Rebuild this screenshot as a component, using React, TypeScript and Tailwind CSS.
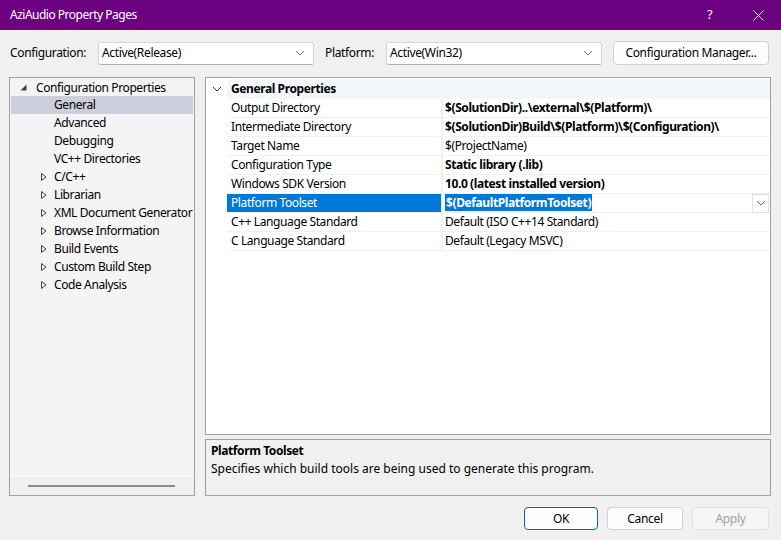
import React from "react";

const font = { fontFamily: '"Noto Sans", "Open Sans", sans-serif' };

type Row = { label: string; value: string; bold?: boolean; selected?: boolean };

const rows: Row[] = [
    { label: "Output Directory", value: "$(SolutionDir)..\\external\\$(Platform)\\", bold: true },
    { label: "Intermediate Directory", value: "$(SolutionDir)Build\\$(Platform)\\$(Configuration)\\", bold: true },
    { label: "Target Name", value: "$(ProjectName)" },
    { label: "Configuration Type", value: "Static library (.lib)", bold: true },
    { label: "Windows SDK Version", value: "10.0 (latest installed version)", bold: true },
    { label: "Platform Toolset", value: "$(DefaultPlatformToolset)", bold: true, selected: true },
    { label: "C++ Language Standard", value: "Default (ISO C++14 Standard)" },
    { label: "C Language Standard", value: "Default (Legacy MSVC)" },
];

const tree: { label: string; expandable?: boolean; selected?: boolean }[] = [
    { label: "General", selected: true },
    { label: "Advanced" },
    { label: "Debugging" },
    { label: "VC++ Directories" },
    { label: "C/C++", expandable: true },
    { label: "Librarian", expandable: true },
    { label: "XML Document Generator", expandable: true },
    { label: "Browse Information", expandable: true },
    { label: "Build Events", expandable: true },
    { label: "Custom Build Step", expandable: true },
    { label: "Code Analysis", expandable: true },
];

function Chevron({ className }: { className?: string }) {
    return (
        <svg width="10" height="6" viewBox="0 0 10 6" className={className}>
            <path d="M1 1 L5 5 L9 1" fill="none" stroke="currentColor" strokeWidth="1" />
        </svg>
    );
}

function Combo({ value }: { value: string }) {
    return (
        <div className="w-[216px] h-[23px] bg-white border border-[#d5d5d5] border-b-[#b0b0b0] rounded-[3px] flex items-center pl-[3px] pr-[8px]">
            <span className="flex-1 text-[12px] tracking-[-0.35px] text-black">{value}</span>
            <Chevron className="text-[#707070]" />
        </div>
    );
}

function Btn({ children, primary, disabled, w }: { children: React.ReactNode; primary?: boolean; disabled?: boolean; w: string }) {
    return (
        <div
            className={`${w} h-[23px] rounded-[4px] flex items-center justify-center text-[12px] tracking-[-0.3px] ${
                primary ? "border border-[#0067c0] bg-[#fdfdfd] text-black" : disabled ? "border border-[#e0e0e0] bg-[#f5f5f5] text-[#a0a0a0]" : "border border-[#d0d0d0] bg-[#fdfdfd] text-black"
            }`}
        >
            {children}
        </div>
    );
}

export default function App() {
    return (
        <div className="w-[781px] h-[540px] bg-[#f0f0f0] flex flex-col overflow-hidden text-black" style={font}>
            {/* title bar */}
            <div className="h-[30px] bg-[#6b0080] flex items-center pl-[10px] text-white shrink-0">
                <span className="flex-1 text-[12px] tracking-[-0.5px]">AziAudio Property Pages</span>
                <span className="text-[13px] w-[10px] mr-[36px]">?</span>
                <svg width="11" height="11" viewBox="0 0 11 11" className="mr-[17px]">
                    <path d="M0.5 0.5 L10.5 10.5 M10.5 0.5 L0.5 10.5" stroke="white" strokeWidth="1" />
                </svg>
            </div>

            {/* configuration row */}
            <div className="flex items-center mt-[11px] h-[24px] pl-[10px] shrink-0">
                <span className="text-[12px] tracking-[-0.35px] w-[88px]">Configuration:</span>
                <Combo value="Active(Release)" />
                <span className="text-[12px] tracking-[-0.35px] ml-[11px] w-[61px]">Platform:</span>
                <Combo value="Active(Win32)" />
                <div className="ml-[11px] w-[156px] h-[24px] bg-[#fdfdfd] border border-[#d0d0d0] rounded-[4px] flex items-center justify-center text-[12px] tracking-[-0.35px]">
                    Configuration Manager...
                </div>
            </div>

            {/* main */}
            <div className="flex mt-[12px] pl-[9px] h-[419px] shrink-0">
                {/* tree */}
                <div className="w-[186px] h-full border border-[#a0a0a0] bg-[#f4f4f4] flex flex-col overflow-hidden">
                    <div className="flex-1 pt-[1px] px-[1px] tracking-[-0.4px]">
                        <div className="h-[17px] flex items-center text-[12px] whitespace-nowrap">
                            <svg width="7" height="7" viewBox="0 0 7 7" className="ml-[9px] mr-[9px] shrink-0">
                                <path d="M6.5 0.5 L6.5 6.5 L0.5 6.5 Z" fill="#404040" />
                            </svg>
                            <span>Configuration Properties</span>
                        </div>
                        {tree.map((t) => (
                            <div key={t.label} className={`h-[18px] flex items-center text-[12px] whitespace-nowrap ${t.selected ? "bg-[#cccedb]" : ""}`}>
                                <div className="w-[43px] shrink-0 flex justify-end pr-[7px]">
                                    {t.expandable && (
                                        <svg width="6" height="8" viewBox="0 0 6 8">
                                            <path d="M0.5 0.5 L5 4 L0.5 7.5 Z" fill="none" stroke="#404040" strokeWidth="1" />
                                        </svg>
                                    )}
                                </div>
                                <span>{t.label}</span>
                            </div>
                        ))}
                    </div>
                    <div className="h-[19px] border-t border-white bg-[#f0f0f0] flex items-center px-[18px]">
                        <div className="w-[147px] h-[2px] bg-[#8a8a8a]" />
                    </div>
                </div>

                {/* right column */}
                <div className="ml-[10px] w-[566px] h-full flex flex-col">
                    <div className="h-[358px] border border-[#a0a0a0] bg-white flex flex-col pt-[1px] tracking-[-0.4px]">
                        <div className="h-[20px] flex items-center bg-[#f3f6fa]">
                            <div className="w-[21px] flex justify-center bg-white h-full items-center">
                                <Chevron className="text-[#303030]" />
                            </div>
                            <span className="text-[12px] font-bold pl-[4px]">General Properties</span>
                        </div>
                        {rows.map((r) => (
                            <div key={r.label} className="h-[19px] flex">
                                <div className="w-[21px] shrink-0" />
                                <div className={`w-[214px] shrink-0 flex items-center pl-[4px] text-[12px] border-b border-[#f0f0f0] ${r.selected ? "bg-[#0078d7] text-white border-[#0078d7]" : ""}`}>
                                    {r.label}
                                </div>
                                <div className="w-[2px] bg-[#f0f0f0] shrink-0" />
                                <div className="flex-1 flex items-center border-b border-[#f0f0f0] text-[12px] pl-[2px] whitespace-nowrap">
                                    {r.selected ? (
                                        <>
                                            <span className="flex-1">
                                                <span className="bg-[#0078d7] text-white font-bold px-[1px]">{r.value}</span>
                                            </span>
                                            <div className="w-[17px] h-[19px] border border-[#e0e0e0] flex items-center justify-center mr-[1px]">
                                                <Chevron className="text-[#606060]" />
                                            </div>
                                        </>
                                    ) : (
                                        <span className={r.bold ? "font-bold" : ""}>{r.value}</span>
                                    )}
                                </div>
                            </div>
                        ))}
                    </div>
                    <div className="mt-[4px] flex-1 border border-[#a0a0a0] bg-[#f0f0f0] px-[5px] pt-[2px]">
                        <div className="text-[12px] font-bold leading-[18px] tracking-[-0.4px]">Platform Toolset</div>
                        <div className="text-[12px] leading-[18px]">Specifies which build tools are being used to generate this program.</div>
                    </div>
                </div>
            </div>

            {/* buttons */}
            <div className="flex justify-end mt-[11px] pr-[12px] gap-[9px]">
                <Btn primary w="w-[74px]">OK</Btn>
                <Btn w="w-[76px]">Cancel</Btn>
                <Btn disabled w="w-[77px]">Apply</Btn>
            </div>
        </div>
    );
}
